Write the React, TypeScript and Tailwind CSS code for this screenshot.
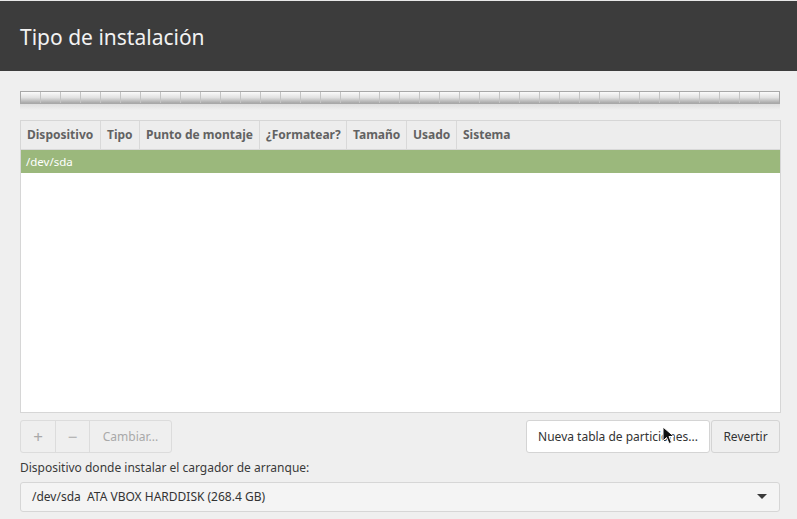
import React from "react";

const cols = [
  { label: "Dispositivo", w: 80 },
  { label: "Tipo", w: 39 },
  { label: "Punto de montaje", w: 120 },
  { label: "¿Formatear?", w: 87 },
  { label: "Tamaño", w: 60 },
  { label: "Usado", w: 50 },
  { label: "Sistema", w: 0 },
];

export default function App() {
  const segs = Array.from({ length: 38 });
  return (
    <div
      className="w-[797px] h-[519px] bg-[#efefef] overflow-hidden relative flex flex-col"
      style={{ fontFamily: '"Noto Sans", "Open Sans", sans-serif' }}
    >
      <div className="h-[1px] bg-[#e8e8e8]" />
      <div className="h-[70px] bg-[#3c3c3c] flex items-center pl-[20px] pt-[3px]">
        <span className="text-[21px] text-[#f2f2f2] leading-none">Tipo de instalación</span>
      </div>

      <div className="px-[20px] pt-[20px] flex flex-col">
        {/* partition bar */}
        <div className="w-[760px] h-[13px] border border-[#a8a8a8] flex bg-gradient-to-b from-[#fbfbfb] via-[#e2e2e2] to-[#a8a8a8]">
          {segs.map((_, i) => (
            <div key={i} className="flex-1 h-full border-r border-[#c4c4c4] last:border-r-0" />
          ))}
        </div>
        <div className="w-[760px] h-[6px] bg-gradient-to-b from-[#d6d6d6] to-[#efefef] opacity-70" />

        {/* table */}
        <div className="mt-[10px] w-[761px] h-[293px] border border-[#d6d6d6] bg-white flex flex-col">
          <div className="h-[29px] bg-[#ededed] border-b border-[#d9d9d9] flex">
            {cols.map((c, i) => (
              <div
                key={i}
                className={`h-full flex items-center px-[6px] text-[12px] font-bold text-[#626262] ${
                  c.w ? "border-r border-[#d9d9d9]" : "flex-1"
                }`}
                style={c.w ? { width: c.w } : undefined}
              >
                {c.label}
              </div>
            ))}
          </div>
          <div className="h-[23px] bg-[#9bb87c] flex items-center px-[5px] text-[11.5px] text-white">
            /dev/sda
          </div>
        </div>

        {/* buttons */}
        <div className="mt-[7px] flex justify-between w-[760px]">
          <div className="flex h-[33px] border border-[#dcdcdc] rounded-[3px] bg-[#efefef] text-[#a9a9a9]">
            <div className="w-[35px] flex items-center justify-center border-r border-[#dcdcdc] text-[17px]">+</div>
            <div className="w-[34px] flex items-center justify-center border-r border-[#dcdcdc] text-[17px]">−</div>
            <div className="w-[81px] flex items-center justify-center text-[12px]">Cambiar...</div>
          </div>
          <div className="flex h-[33px] gap-[1px]">
            <div className="w-[184px] flex items-center justify-center border border-[#d4d4d4] rounded-[3px] bg-white text-[12px] text-[#333]">
              Nueva tabla de particiones...
            </div>
            <div className="w-[69px] flex items-center justify-center border border-[#d4d4d4] rounded-[3px] bg-[#efefef] text-[12px] text-[#333]">
              Revertir
            </div>
          </div>
        </div>

        <div className="mt-[6px] text-[12px] text-[#3a3a3a] leading-[18px]">
          Dispositivo donde instalar el cargador de arranque:
        </div>

        <div className="mt-[5px] w-[760px] h-[30px] border border-[#d6d6d6] rounded-[3px] bg-[#f4f4f4] flex items-center justify-between pl-[11px] pr-[12px]">
          <span className="text-[12px] text-[#333]">/dev/sda&nbsp; ATA VBOX HARDDISK (268.4 GB)</span>
          <svg width="10" height="6" viewBox="0 0 10 6">
            <path d="M0 0 L10 0 L5 5 Z" fill="#3a3a3a" />
          </svg>
        </div>
      </div>

      {/* mouse cursor */}
      <svg className="absolute left-[662px] top-[426px]" width="14" height="20" viewBox="0 0 14 20">
        <path d="M1 1 L1 15 L4.5 11.5 L7 17.5 L9.5 16.5 L7 10.5 L12 10.5 Z" fill="#111" stroke="#fff" strokeWidth="1" strokeLinejoin="round" />
      </svg>
    </div>
  );
}
